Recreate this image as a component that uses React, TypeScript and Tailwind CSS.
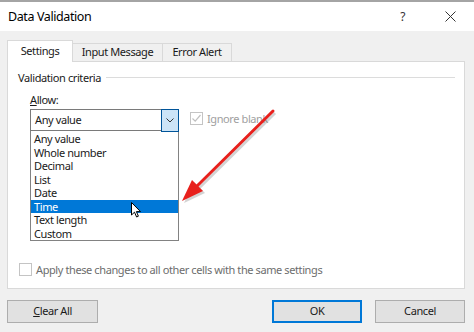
import React from "react";

const font = { fontFamily: '"Noto Sans", "Open Sans", sans-serif' };

function Check({ checked }: { checked?: boolean }) {
  return (
    <div className="w-[13px] h-[13px] border border-[#c4c4c4] bg-white flex items-center justify-center shrink-0">
      {checked && (
        <svg width="11" height="11" viewBox="0 0 11 11">
          <path d="M1.5 5.5 L4.2 8.2 L9.5 2" fill="none" stroke="#c0c0c0" strokeWidth="1.2" />
        </svg>
      )}
    </div>
  );
}

export default function App() {
  const items = ["Any value", "Whole number", "Decimal", "List", "Date", "Time", "Text length", "Custom"];
  return (
    <div className="relative w-[474px] h-[332px] bg-[#f0f0f0] overflow-hidden text-[11px] tracking-[-0.4px] text-[#1a1a1a]" style={font}>
      <div className="h-[2px] bg-[#a4a4a4]" />
      <div className="h-[29px] bg-white flex items-center pl-[8px] pr-[18px]">
        <span className="text-[12.5px] tracking-[-0.4px] text-black mt-[1px]">Data Validation</span>
        <div className="ml-auto flex items-center">
          <span className="text-[12px] text-[#333] mr-[40px]">?</span>
          <svg width="11" height="11" viewBox="0 0 11 11">
            <path d="M0.5 0.5 L10.5 10.5 M10.5 0.5 L0.5 10.5" stroke="#333" strokeWidth="1" />
          </svg>
        </div>
      </div>

      <div className="pl-[7px] pr-[9px]">
        {/* tabs */}
        <div className="flex items-end mt-[9px] h-[21px]">
          <div className="relative z-10 w-[66px] h-[22px] -mb-px bg-white border border-b-0 border-[#d9d9d9] flex items-center justify-center">
            Settings
          </div>
          <div className="w-[90px] h-[18px] border-t border-r border-[#d9d9d9] flex items-center justify-center">
            Input Message
          </div>
          <div className="w-[69px] h-[18px] border-t border-r border-[#d9d9d9] flex items-center justify-center">
            Error Alert
          </div>
        </div>
        {/* panel */}
        <div className="h-[228px] bg-white border border-[#d9d9d9] flex flex-col pl-[10px] pr-[9px] pt-[8px]">
          <div className="flex items-center h-[16px]">
            <span>Validation criteria</span>
            <div className="flex-1 h-px bg-[#dcdcdc] ml-[5px] mt-[-1px]" />
          </div>
          <div className="flex pl-[12px] mt-[6px]">
            <div className="flex flex-col">
              <span className="h-[16px] leading-[16px]"><span className="underline">A</span>llow:</span>
              <div className="relative mt-[1px] w-[149px] h-[22px] border border-[#7a7a7a] bg-white flex items-center pl-[4px]">
                Any value
                <div className="absolute right-[-1px] top-[-1px] w-[18px] h-[23px] bg-[#cce4f7] border border-[#005499] flex items-center justify-center">
                  <svg width="8" height="5" viewBox="0 0 8 5">
                    <path d="M0.5 0.5 L4 4 L7.5 0.5" fill="none" stroke="#333" strokeWidth="1" />
                  </svg>
                </div>
              </div>
              <div className="w-[149px] h-[110px] border border-[#828282] border-t-0 bg-white flex flex-col pt-[1px]">
                {items.map((it) => (
                  <div
                    key={it}
                    className={`h-[13.5px] leading-[13.5px] pl-[3px] ${it === "Time" ? "bg-[#0078d7] text-white" : ""}`}
                  >
                    {it}
                  </div>
                ))}
              </div>
            </div>
            <div className="flex items-start ml-[11px] mt-[20px]">
              <Check checked />
              <span className="ml-[4px] -mt-[1px] text-[#a0a0a0]">Ignore blank</span>
            </div>
          </div>
          <div className="flex items-center mt-auto mb-[10px] ml-[1px]">
            <Check />
            <span className="ml-[4px] text-[#6d6d6d]">Apply these changes to all other cells with the same settings</span>
          </div>
        </div>
        {/* buttons */}
        <div className="flex mt-[11px]">
          <button className="w-[91px] h-[23px] bg-[#e1e1e1] border border-[#adadad] flex items-center justify-center">
            <span><span className="underline">C</span>lear All</span>
          </button>
          <button className="ml-auto w-[90px] h-[23px] bg-[#e1e1e1] border-2 border-[#0078d7] flex items-center justify-center">
            OK
          </button>
          <button className="ml-[13px] w-[90px] h-[23px] bg-[#e1e1e1] border border-[#adadad] flex items-center justify-center">
            Cancel
          </button>
        </div>
      </div>

      {/* red arrow annotation */}
      <svg className="absolute left-0 top-0 pointer-events-none" width="474" height="332" viewBox="0 0 474 332">
        <g opacity="0.25" transform="translate(2,2)">
          <line x1="273" y1="111" x2="195" y2="188" stroke="#555" strokeWidth="3" />
          <polygon points="182,201 192,180 203,191" fill="#555" />
        </g>
        <line x1="273" y1="111" x2="195" y2="188" stroke="#e8201c" strokeWidth="3" strokeLinecap="round" />
        <polygon points="182,201 192,180 203,191" fill="#e8201c" />
      </svg>

      {/* mouse cursor */}
      <svg className="absolute left-[131px] top-[202px] pointer-events-none" width="11" height="17" viewBox="0 0 11 17">
        <path d="M0.5 0.5 L0.5 13 L3.5 10.2 L5.6 15 L7.4 14.2 L5.4 9.6 L9.5 9.6 Z" fill="white" stroke="black" strokeWidth="1" strokeLinejoin="round" />
      </svg>
    </div>
  );
}
